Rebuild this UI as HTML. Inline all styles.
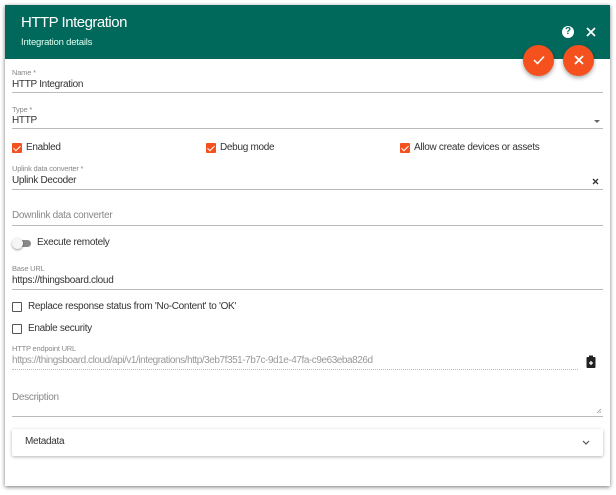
<!DOCTYPE html>
<html><head><style>
*{margin:0;padding:0;box-sizing:border-box}
body{width:616px;height:495px;background:#fff;font-family:"Liberation Sans",sans-serif;position:relative;overflow:hidden;color:#222}
.dlg{position:absolute;left:5px;top:5px;width:605px;height:481px;background:#fff;box-shadow:0 1px 4px rgba(0,0,0,.55)}
.hdr{position:absolute;left:5px;top:5px;width:605px;height:54px;background:#00695c}
.a{position:absolute;white-space:nowrap}
.lbl{font-size:7.5px;color:#888;letter-spacing:-.2px}
.val{font-size:10px;color:#333;letter-spacing:-.3px}
.ph{font-size:10px;color:#888;letter-spacing:-.3px}
.ul{position:absolute;left:12px;width:591px;height:1px;background:#bbb}
.cb{position:absolute;width:10px;height:10px;background:#f4511e;border-radius:1px}
.cb:after{content:"";position:absolute;left:3px;top:1px;width:3px;height:6px;border:solid #fff;border-width:0 1.3px 1.3px 0;transform:rotate(45deg)}
.ecb{position:absolute;width:10px;height:10px;border:1.5px solid #555;border-radius:1px}
.fab{position:absolute;width:31px;height:31px;border-radius:50%;background:#f4511e;box-shadow:0 2px 4px rgba(0,0,0,.35);color:#fff;text-align:center;line-height:31px;font-size:14px}
</style></head><body>
<div class="dlg"></div>
<div class="hdr"></div>
<div class="a" style="left:21px;top:14px;font-size:15px;color:#fff;letter-spacing:-.5px">HTTP Integration</div>
<div class="a" style="left:21px;top:37px;font-size:9.5px;color:#dfe;letter-spacing:-.2px">Integration details</div>
<div class="a" style="left:562px;top:26px;width:12px;height:12px;border-radius:50%;background:#fff;color:#00695c;font-size:10px;font-weight:bold;text-align:center;line-height:12px">?</div>
<svg class="a" style="left:586px;top:27px" width="10" height="10"><path d="M1 1L9 9M9 1L1 9" stroke="#fff" stroke-width="1.8"/></svg>
<div class="fab" style="left:523px;top:45px"><svg width="12" height="10" style="margin-top:10px"><path d="M1 5L4.5 8.5L11 1.5" stroke="#fff" stroke-width="1.5" fill="none"/></svg></div>
<div class="fab" style="left:563px;top:45px"><svg width="10" height="10" style="margin-top:10px"><path d="M1 1L9 9M9 1L1 9" stroke="#fff" stroke-width="1.8"/></svg></div>

<div class="a lbl" style="left:12px;top:68px">Name *</div>
<div class="a val" style="left:12px;top:79px">HTTP Integration</div>
<div class="ul" style="top:92px"></div>
<div class="a lbl" style="left:12px;top:105px">Type *</div>
<div class="a val" style="left:12px;top:115px">HTTP</div>
<div class="a" style="left:594px;top:120px;border:3px solid transparent;border-top:3.5px solid #666"></div>
<div class="ul" style="top:128px"></div>

<div class="cb" style="left:12px;top:143px"></div><div class="a val" style="left:26px;top:142px">Enabled</div>
<div class="cb" style="left:206px;top:143px"></div><div class="a val" style="left:220px;top:142px">Debug mode</div>
<div class="cb" style="left:400px;top:143px"></div><div class="a val" style="left:414px;top:142px">Allow create devices or assets</div>

<div class="a lbl" style="left:12px;top:164px">Uplink data converter *</div>
<div class="a val" style="left:12px;top:175px">Uplink Decoder</div>
<svg class="a" style="left:592px;top:178px" width="7" height="7"><path d="M1 1L6 6M6 1L1 6" stroke="#333" stroke-width="1.3"/></svg>
<div class="ul" style="top:189px"></div>
<div class="a ph" style="left:12px;top:210px">Downlink data converter</div>
<div class="ul" style="top:225px"></div>

<div class="a" style="left:13px;top:240px;width:18px;height:7px;border-radius:4px;background:#888"></div>
<div class="a" style="left:12px;top:238px;width:11px;height:11px;border-radius:50%;background:#f5f5f5;box-shadow:0 1px 2px rgba(0,0,0,.4)"></div>
<div class="a val" style="left:37px;top:237px">Execute remotely</div>

<div class="a lbl" style="left:12px;top:264px">Base URL</div>
<div class="a val" style="left:12px;top:275px">https://thingsboard.cloud</div>
<div class="ul" style="top:289px"></div>

<div class="ecb" style="left:12px;top:302px"></div><div class="a val" style="left:28px;top:301px">Replace response status from 'No-Content' to 'OK'</div>
<div class="ecb" style="left:12px;top:324px"></div><div class="a val" style="left:28px;top:323px">Enable security</div>

<div class="a lbl" style="left:12px;top:344px">HTTP endpoint URL</div>
<div class="a ph" style="left:12px;top:355px;color:#999;letter-spacing:-.45px">https://thingsboard.cloud/api/v1/integrations/http/3eb7f351-7b7c-9d1e-47fa-c9e63eba826d</div>
<div class="a" style="left:12px;top:369px;width:566px;border-top:1px dotted #bbb"></div>
<svg class="a" style="left:586px;top:355px" width="10" height="13"><rect x="0.5" y="2" width="9" height="11" rx="1" fill="#222"/><rect x="3" y="0.5" width="4" height="3" fill="#222"/><path d="M3 8H7M5 6V10" stroke="#fff" stroke-width="1.3"/></svg>

<div class="a ph" style="left:12px;top:392px">Description</div>
<svg class="a" style="left:596px;top:408px" width="6" height="6"><path d="M1 5L5 1M3.5 5L5 3.5" stroke="#999" stroke-width=".8"/></svg>
<div class="ul" style="top:416px"></div>

<div class="a" style="left:12px;top:429px;width:591px;height:27px;background:#fff;box-shadow:0 1px 3px rgba(0,0,0,.3);border-radius:2px"></div>
<div class="a val" style="left:25px;top:436px;color:#333">Metadata</div>
<svg class="a" style="left:582px;top:440px" width="8" height="6"><path d="M1 1L4 4L7 1" stroke="#555" stroke-width="1.2" fill="none"/></svg>
</body></html>
